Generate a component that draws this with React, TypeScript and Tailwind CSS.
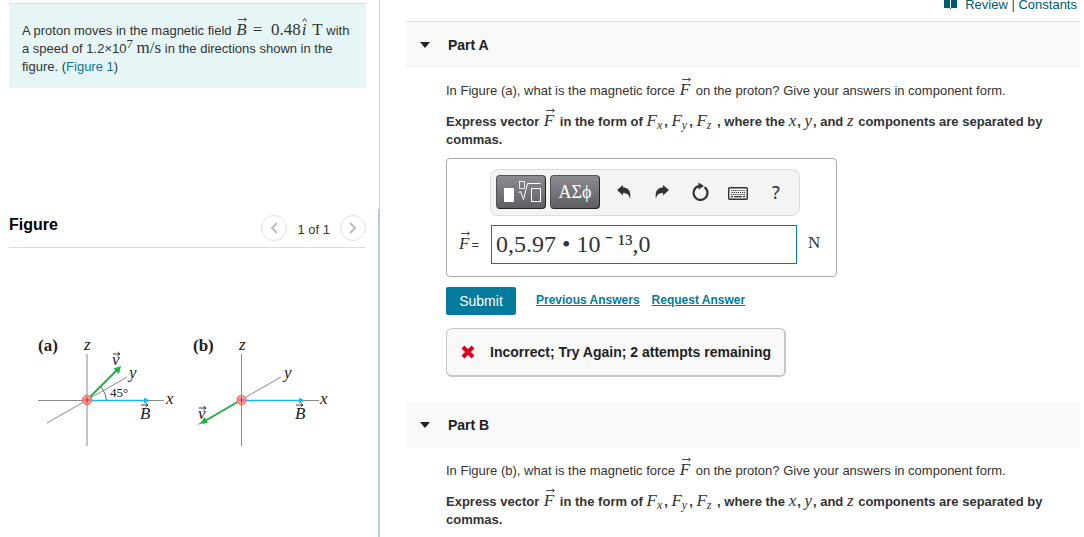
import React, { useState } from "react";

function Over({ children, hat = false }: { children: React.ReactNode; hat?: boolean }) {
  return (
    <span className="relative mr-0.5 ml-px inline-block font-['Liberation_Serif',serif] text-[17px] leading-[12px] font-normal italic">
      {children}
      <svg
        aria-hidden="true"
        viewBox="0 0 10 5"
        className="absolute -top-[7px] left-1/2 h-[5px] w-[10px] -translate-x-1/3"
        fill="none"
        stroke="currentColor"
        strokeWidth="0.9"
      >
        {hat ? <path d="M2 4.5 4 1.5 6 4.5" /> : <path d="M0.5 2.5H8.5M6.7 0.8 8.8 2.5 6.7 4.2" />}
      </svg>
    </span>
  );
}

function M({ children }: { children: React.ReactNode }) {
  return (
    <span className="mr-px font-['Liberation_Serif',serif] text-[17px] leading-[12px] font-normal italic">{children}</span>
  );
}

function Sub({ children }: { children: React.ReactNode }) {
  return <sub className="bottom-[-3px] mr-px text-[12px] leading-[10px]">{children}</sub>;
}

function Upright({ children }: { children: React.ReactNode }) {
  return <span className="font-['Liberation_Serif',serif] text-[17px] leading-[12px]">{children}</span>;
}

function PartHeader({ title, first = false }: { title: string; first?: boolean }) {
  return (
    <h2 className={first ? "border-t border-[#dcdcdc] bg-[#f9f9f9]" : "bg-[#f9f9f9]"}>
      <button type="button" aria-expanded="true" className="flex h-[46px] w-full items-center gap-[18px] pl-[14px] text-left text-[14px] font-bold text-[#222]">
        <svg aria-hidden="true" viewBox="0 0 10 6" className="h-[6px] w-[10px]" fill="#222">
          <path d="M0 0H10L5 6Z" />
        </svg>
        {title}
      </button>
    </h2>
  );
}

function Prompt({ figure }: { figure: string }) {
  return (
    <>
      <p className="pt-[14px]">
        In Figure ({figure}), what is the magnetic force <Over>F</Over> on the proton? Give your answers in component form.
      </p>
      <p className="pt-[13px] font-bold">
        Express vector <Over>F</Over> in the form of <M>F<Sub>x</Sub></M>, <M>F<Sub>y</Sub></M>, <M>F<Sub>z</Sub></M> , where the{" "}
        <M>x</M>, <M>y</M>, and <M>z</M> components are separated by commas.
      </p>
    </>
  );
}

const keyClass =
  "flex h-[34px] w-[50px] items-center justify-center rounded border border-[#555] border-r-[#222] border-b-[#222] bg-linear-to-b from-[#8c8c93] to-[#5e5e62] text-white";
const toolClass = "flex h-[34px] w-[38px] items-center justify-center text-[#333]";

function Toolbar() {
  return (
    <div className="flex h-[47px] items-center rounded-lg border border-[#dcdcdc] bg-[#f4f4f4] pb-0.5 pl-[5px]">
      <button type="button" aria-label="Templates" className={keyClass}>
        <svg viewBox="0 0 40 24" className="h-6 w-10" fill="none" stroke="white">
          <rect x="3" y="8" width="10" height="14" fill="white" stroke="none" />
          <rect x="18.500" y="1.500" width="5" height="7" strokeWidth="0.8" />
          <path d="M17.500 12.500 19.500 11.500 22.500 19.500 26.500 3.500H39.500" />
          <rect x="30.500" y="8.500" width="9" height="13" />
        </svg>
      </button>
      <button type="button" className={keyClass + " ml-1 font-['Liberation_Serif',serif] text-[18px]"}>
        ΑΣϕ
      </button>
      <div className="ml-[5px] flex">
        <button type="button" aria-label="Undo" className={toolClass}>
          <svg viewBox="0 0 14 14" className="size-[14px]" fill="currentColor">
            <path d="M0 5 6 0V2.600C11 2.600 14.500 6 13 14 12.500 10 10 8 6 8V10.500Z" />
          </svg>
        </button>
        <button type="button" aria-label="Redo" className={toolClass}>
          <svg viewBox="0 0 14 14" className="size-[14px]" fill="currentColor">
            <path d="M14 5 8 0V2.600C3 2.600 -0.500 6 1 14 1.500 10 4 8 8 8V10.500Z" />
          </svg>
        </button>
        <button type="button" aria-label="Reset" className={toolClass}>
          <svg viewBox="0 0 18 20" className="h-5 w-[18px]" fill="none" stroke="currentColor" strokeWidth="2.2">
            <path d="M13.500 5.200A7 7 0 1 1 8 4.100" />
            <path d="M7.500 0.500 13 4 7.500 7.500Z" fill="currentColor" stroke="none" />
          </svg>
        </button>
        <button type="button" aria-label="Keyboard" className={toolClass}>
          <svg viewBox="0 0 20 13" className="mt-1 h-[13px] w-5" fill="none" stroke="currentColor">
            <rect x="0.700" y="0.700" width="18.600" height="11.600" rx="1" strokeWidth="1.400" />
            <path d="M3 3.500H17M3.500 5.500H17M3 7.500H17" strokeDasharray="1.200 0.900" />
            <path d="M3 9.700H5M6 9.700H14M15 9.700H17" strokeWidth="1.200" />
          </svg>
        </button>
        <button type="button" aria-label="Help" className={toolClass + " font-['Noto_Sans',sans-serif] text-[18px]"}>
          ?
        </button>
      </div>
    </div>
  );
}

function Proton({ x }: { x: number }) {
  return (
    <g>
      <circle cx={x} cy="68" r="4.600" fill="#f9a19b" stroke="#ee5a5a" />
      <path d={`M${x - 3} 68h6M${x} 65v6`} stroke="#e0283c" strokeWidth="1" />
    </g>
  );
}

function Arrowed({ x, y, rise, children }: { x: number; y: number; rise: number; children: string }) {
  return (
    <g>
      <text x={x} y={y} fontStyle="italic">{children}</text>
      <path
        d={`M${x + 1} ${y - rise}h7m-2.500 -2l2.500 2l-2.500 2`}
        stroke="#222"
        strokeWidth="0.9"
        fill="none"
      />
    </g>
  );
}

function Axes() {
  return (
    <svg
      role="img"
      aria-label="Proton velocity and magnetic field"
      viewBox="0 0 300 120"
      className="ml-[26px] h-[120px] w-[300px] font-['Liberation_Serif',serif] text-[17px]"
      fill="#222"
    >
      <path d="M52 22V114" stroke="#c4c4c4" strokeWidth="2" />
      <g stroke="#8a8a8a" fill="none">
        <path d="M3 68.500H129M206.500 22V114M206 68.500H284M206 68 246 45" />
        <path d="M12 91 92 45" />
        <path d="M163 92.500 206 68" />
        <path d="M66 55Q71 61 71.500 68" stroke="#444" strokeWidth="0.8" />
      </g>
      <g fill="none" strokeWidth="1.500" stroke="#1db4ee">
        <path d="M56 68.500H110M211 68.500H266" />
      </g>
      <path d="M109 65.800 115 68.500 109 71.200ZM264 65.800 270 68.500 264 71.200Z" fill="#1db4ee" />
      <path d="M54 66 82 38M206 68 170 89" stroke="#22b04b" strokeWidth="2" />
      <path d="M86 34 84 42 78.500 36.500ZM165 92 169.500 85 173 91Z" fill="#22b04b" />
      <Proton x={52} />
      <Proton x={206.5} />
      <text x="3" y="19" fontWeight="bold">(a)</text>
      <text x="158" y="19" fontWeight="bold">(b)</text>
      <g fontStyle="italic">
        <text x="49" y="18">z</text>
        <text x="204" y="18">z</text>
        <text x="94" y="46">y</text>
        <text x="249" y="46">y</text>
        <text x="131" y="72">x</text>
        <text x="285" y="72">x</text>
      </g>
      <text x="75" y="65" className="text-[13px]">45°</text>
      <Arrowed x={77} y={33} rise={11}>v</Arrowed>
      <Arrowed x={163} y={87} rise={11}>v</Arrowed>
      <Arrowed x={105} y={87} rise={14}>B</Arrowed>
      <Arrowed x={260} y={87} rise={14}>B</Arrowed>
    </svg>
  );
}

const pageButton = "flex size-[26px] items-center justify-center rounded-full border border-[#e2e2e2] text-[#bbb]";

export default function App() {
  const [answer, setAnswer] = useState("0,5.97 • 10\u2009⁻\u2009¹³,0");
  return (
    <div className="flex h-screen overflow-hidden bg-white font-['Liberation_Sans',Arial,sans-serif] text-[13px] leading-[18px] text-[#333]">
      <aside className="flex w-[378px] shrink-0 flex-col pt-[3px] pr-3 pl-[9px]">
        <div className="border-t border-[#d5dfe0] bg-[#e6f6f7] pt-[18px] pr-3 pb-3 pl-[13px]">
          A proton moves in the magnetic field <Over>B</Over>
          <Upright>&nbsp;=&nbsp; 0.48</Upright>
          <Over hat>i</Over>
          <Upright> T</Upright> with a speed of 1.2×10
          <sup className="top-[-5px] font-['Liberation_Serif',serif] text-[13px] leading-[10px]">7</sup>{" "}
          <Upright>m/s</Upright> in the directions shown in the figure. (
          <a href="#figure" className="text-[#047a9c]">Figure 1</a>)
        </div>
        <div id="figure" className="mt-[120px] flex h-10 items-center border-b border-[#dcdcdc]">
          <h2 className="flex-1 pb-1.5 text-[16px] font-bold text-black">Figure</h2>
          <button type="button" aria-label="Previous figure" className={pageButton}>
            <svg viewBox="0 0 8 12" className="h-3 w-2" fill="none" stroke="currentColor" strokeWidth="2">
              <path d="M7 1 2 6 7 11" />
            </svg>
          </button>
          <span className="px-[10px] pt-1">1 of 1</span>
          <button type="button" aria-label="Next figure" className={pageButton}>
            <svg viewBox="0 0 8 12" className="h-3 w-2" fill="none" stroke="currentColor" strokeWidth="2">
              <path d="M1 1 6 6 1 11" />
            </svg>
          </button>
        </div>
        <div className="pt-[84px]">
          <Axes />
        </div>
      </aside>
      <div className="flex w-0.5 shrink-0 flex-col items-end">
        <div className="h-[209px] w-px bg-[#c5d0e0]" />
        <div className="w-full flex-1 bg-[#b8cbe0]" />
      </div>

      <main className="min-w-0 flex-1 pr-1 pl-[26px]">
        <nav className="flex h-[21px] items-start justify-end gap-2 pr-[3px] text-[13px] text-[#005a70]">
          <svg aria-hidden="true" viewBox="0 0 13 9" className="h-[9px] w-[13px]" fill="currentColor">
            <path d="M0 0H6V8H0ZM7 0H13V8H7ZM6 8H7V9H6Z" />
          </svg>
          <span className="-mt-1">
            <a href="#review">Review</a> | <a href="#constants">Constants</a>
          </span>
        </nav>

        <section>
          <PartHeader title="Part A" first />
          <div className="pr-5 pl-10">
            <Prompt figure="a" />
            <div className="mt-[9px] grid h-[119px] w-[391px] max-w-full grid-cols-[32px_310px_1fr] content-start gap-y-[9px] rounded border border-[#a9a9a9] pt-[10px] pl-[11px]">
              <div className="col-start-2">
                <Toolbar />
              </div>
              <label htmlFor="answer" className="col-start-1 self-center">
                <Over>F</Over>=
              </label>
              <input
                id="answer"
                value={answer}
                onChange={(e) => setAnswer(e.target.value)}
                className="mr-[3px] ml-px h-[39px] min-w-0 border border-[#007fa3] bg-white px-1 pb-1 font-['Liberation_Serif',serif] text-[24px] text-[#333] outline-none"
              />
              <span className="self-center pb-1 pl-2 font-['Liberation_Serif',serif] text-[17px]">N</span>
            </div>
            <div className="mt-[10px] flex items-center gap-3 text-[12px] font-bold text-[#047a9c]">
              <button type="button" className="mr-2 h-7 w-[70px] rounded-xs bg-[#047a9c] text-[14px] font-normal text-white">
                Submit
              </button>
              <a href="#previous" className="-mt-0.5 underline">Previous Answers</a>
              <a href="#request" className="-mt-0.5 underline">Request Answer</a>
            </div>
            <div role="status" className="mt-[13px] flex h-[49px] w-fit items-center gap-[15px] rounded-md border border-r-2 border-b-2 border-[#c7c7c7] bg-[#f9f9f9] pr-[13px] pl-[14px] text-[14px] font-bold text-[#222]">
              <svg aria-hidden="true" viewBox="0 0 14 14" className="size-[14px]" stroke="#db0020" strokeWidth="4">
                <path d="M2 2 12 12M12 2 2 12" />
              </svg>
              Incorrect; Try Again; 2 attempts remaining
            </div>
          </div>
        </section>

        <section className="mt-[25px]">
          <PartHeader title="Part B" />
          <div className="pr-5 pl-10">
            <Prompt figure="b" />
          </div>
        </section>
      </main>
    </div>
  );
}
